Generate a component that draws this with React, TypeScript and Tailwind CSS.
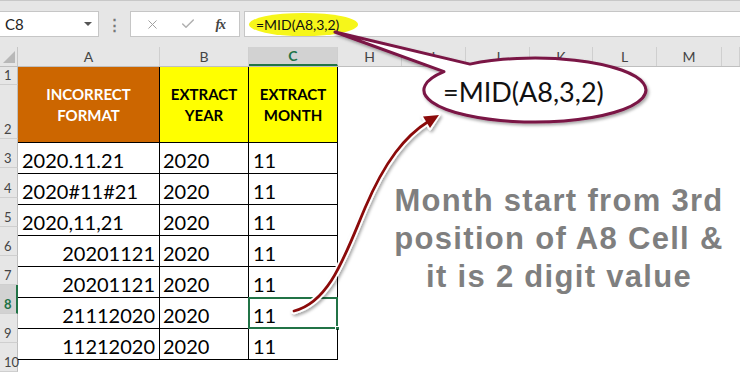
import { X, Check } from 'lucide-react';

const headerCols = [
  { label: 'A', w: 'w-[142px]' },
  { label: 'B', w: 'w-[89px]' },
  { label: 'C', w: 'w-[89px]', active: true },
  { label: 'H', w: 'w-[64px]' },
  { label: 'I', w: 'w-[64px]' },
  { label: 'J', w: 'w-[64px]' },
  { label: 'K', w: 'w-[63px]' },
  { label: 'L', w: 'w-[64px]' },
  { label: 'M', w: 'w-[65px]' },
  { label: '', w: 'flex-1' },
];

const rows = [
  { a: '2020.11.21', right: false },
  { a: '2020#11#21', right: false },
  { a: '2020,11,21', right: false },
  { a: '20201121', right: true },
  { a: '20201121', right: true },
  { a: '21112020', right: true },
  { a: '11212020', right: true },
];

function Toolbar() {
  return (
    <div className="h-[47px] bg-[#e6e6e6] border-t border-[#c8c8c8] flex items-start pt-[10px]">
      {/* name box */}
      <div className="w-[99px] h-[26px] bg-white border border-l-0 border-[#c6c6c6] flex items-center justify-between pl-[5px] pr-[6px]">
        <span className="text-[15px] text-[#222]">C8</span>
        <span className="w-0 h-0 border-l-[4px] border-r-[4px] border-t-[4px] border-l-transparent border-r-transparent border-t-[#555] mb-[1px]" />
      </div>
      <div className="w-[31px] h-[26px] flex items-center justify-center text-[#777] text-[15px] font-bold">⋮</div>
      {/* cancel / enter / fx */}
      <div className="w-[110px] h-[26px] bg-white border border-[#c6c6c6] flex items-center justify-around px-[4px]">
        <X size={15} strokeWidth={1.6} color="#a0a0a0" />
        <Check size={16} strokeWidth={2.2} color="#b0b0b0" />
        <span className="text-[14px] text-[#444] italic font-['Liberation_Serif',serif] font-bold tracking-[-1px]">fx</span>
      </div>
      {/* formula bar */}
      <div className="flex-1 ml-[4px] h-[26px] bg-white border border-r-0 border-[#c6c6c6] flex items-center pl-[4px]">
        <span className="h-[23px] pl-[7px] pr-[19px] rounded-[50%] bg-[#f6f61a] flex items-center text-[14px] text-[#111]">
          =MID(A8,3,2)
        </span>
      </div>
    </div>
  );
}

function ColumnHeaders() {
  return (
    <div className="h-[20px] flex bg-[#e6e6e6] border-b border-[#bfbfbf]">
      <div className="w-[18px] border-r border-[#c6c6c6] flex items-end justify-end pr-[2px] pb-[3px]">
        <svg width="12" height="12" viewBox="0 0 12 12">
          <polygon points="12,0 12,12 0,12" fill="#b8b8b8" />
        </svg>
      </div>
      {headerCols.map((c, i) => (
        <div
          key={i}
          className={`${c.w} h-full flex items-center justify-center border-r border-[#cfcfcf] text-[14px] ${
            c.active
              ? 'bg-[#d2d2d2] text-[#217346] font-bold border-b-2 border-b-[#217346]'
              : 'text-[#444]'
          }`}
        >
          {c.label}
        </div>
      ))}
    </div>
  );
}

function RowHeaders() {
  const hs = ['h-[18px]', 'h-[58px]', 'h-[31px]', 'h-[31px]', 'h-[31px]', 'h-[31px]', 'h-[31px]', 'h-[31px]', 'h-[31px]', 'h-[31px]'];
  return (
    <div className="w-[18px] flex flex-col bg-[#e6e6e6]">
      {hs.map((h, i) => {
        const active = i + 1 === 8;
        return (
          <div
            key={i}
            className={`${h} flex items-end pl-[4px] pb-[1px] border-b border-[#cfcfcf] text-[13px] leading-[16px] ${
              active
                ? 'bg-[#d2d2d2] text-[#217346] font-bold border-r-2 border-r-[#217346]'
                : 'text-[#444] border-r border-r-[#bfbfbf]'
            }`}
          >
            {i + 1}
          </div>
        );
      })}
    </div>
  );
}

function Table() {
  const cell = 'h-[31px] border-r border-b border-black flex items-end pb-[1px] text-[20px] leading-[24px] text-black';
  return (
    <div className="w-[320px] grid grid-cols-[142px_89px_89px] grid-rows-[76px_repeat(7,31px)] self-start">
      <div className="bg-[#cc6600] border-r border-b border-black flex flex-col items-center justify-center text-white font-bold text-[15px] leading-[21px]">
        <span>INCORRECT</span>
        <span>FORMAT</span>
      </div>
      <div className="bg-[#ffff00] border-r border-b border-black flex flex-col items-center justify-center text-black font-bold text-[15px] leading-[21px]">
        <span>EXTRACT</span>
        <span>YEAR</span>
      </div>
      <div className="bg-[#ffff00] border-r border-b border-black flex flex-col items-center justify-center text-black font-bold text-[15px] leading-[21px]">
        <span>EXTRACT</span>
        <span>MONTH</span>
      </div>
      {rows.map((r, i) => (
        <div key={i} className="contents">
          <div className={`${cell} ${r.right ? 'justify-end pr-[4px]' : 'pl-[4px]'}`}>{r.a}</div>
          <div className={`${cell} pl-[3px]`}>2020</div>
          <div className={`${cell} pl-[4px] relative`}>
            11
            {i === 5 && (
              <>
                <span className="absolute -left-px -top-px -right-px -bottom-px border-2 border-[#217346]" />
                <span className="absolute -right-[3px] -bottom-[3px] w-[5px] h-[5px] bg-[#217346] border border-white" />
              </>
            )}
          </div>
        </div>
      ))}
    </div>
  );
}

function Overlay() {
  return (
    <svg className="absolute inset-0 pointer-events-none" width="740" height="372" viewBox="0 0 740 372">
      <defs>
        <filter id="sh" x="-20%" y="-20%" width="140%" height="140%">
          <feDropShadow dx="1.5" dy="2" stdDeviation="1.5" floodColor="#000" floodOpacity="0.35" />
        </filter>
      </defs>
      {/* callout */}
      <path
        d="M 335 32 L 470 64.1 A 111 32 0 1 1 444 71.7 Z"
        fill="#fff"
        stroke="#7a1445"
        strokeWidth="3"
        strokeLinejoin="round"
        filter="url(#sh)"
      />
      <text x="443" y="102" fontFamily="Lato, sans-serif" fontSize="27" fill="#111">
        =MID(A8,3,2)
      </text>
      {/* arrow */}
      <g filter="url(#sh)">
        <path d="M 294 311 C 330 302, 345 255, 365 208 S 405 136, 429 121" fill="none" stroke="#fff" strokeWidth="6.5" strokeLinecap="round" />
        <polygon points="439,115 430,129 422,116" fill="#fff" stroke="#fff" strokeWidth="3" strokeLinejoin="round" />
      </g>
      <path d="M 294 311 C 330 302, 345 255, 365 208 S 405 136, 429 121" fill="none" stroke="#8b0a0a" strokeWidth="2.8" strokeLinecap="round" />
      <polygon points="439,115 430,128 423,116.5" fill="#8b0a0a" />
    </svg>
  );
}

export default function App() {
  return (
    <div className="relative w-[740px] h-[372px] overflow-hidden bg-white font-['Lato',sans-serif]">
      <Toolbar />
      <ColumnHeaders />
      <div className="flex h-[305px]">
        <RowHeaders />
        <Table />
        <div className="flex-1 pl-[40px] pt-[115px] text-center font-['Liberation_Sans',Arial,sans-serif] font-bold text-[31px] leading-[38px] tracking-[1.3px] text-[#7f7f7f] whitespace-nowrap">
          <div>Month start from 3rd</div>
          <div>position of A8 Cell &amp;</div>
          <div>it is 2 digit value</div>
        </div>
      </div>
      <Overlay />
    </div>
  );
}
